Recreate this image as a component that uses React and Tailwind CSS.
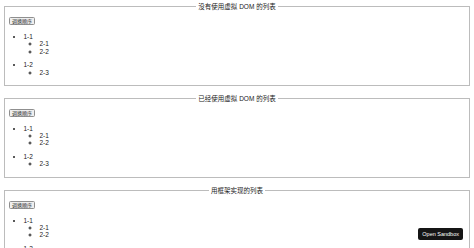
import React from "react";

const font = "font-['Liberation_Sans','Noto_Sans_CJK_SC',sans-serif]";

function ListBlock({ title }) {
  return (
    <fieldset className="border border-[#bcbcbc] px-[4px] pt-[3px] pb-[3px] mb-[8.5px]">
      <legend className="mx-auto px-[2px] text-[6.5px] leading-[7.4px] text-[#222]">{title}</legend>
      <div className="mt-[4px]">
        <button className="border border-[#8f8f8f] bg-[#efefef] rounded-[1.5px] px-[2px] h-[8px] text-[5px] leading-[6px] text-[#222] flex items-center">
          调换顺序
        </button>
      </div>
      <ul className="list-disc pl-[14.5px] mt-[6.5px] mb-[6.5px] text-[6.5px] leading-[7.3px] text-[#222]">
        <li className="pt-[1px]">
          1-1
          <ul className="list-[circle] pl-[16px] mb-[6.5px]">
            <li>2-1</li>
            <li>2-2</li>
          </ul>
        </li>
        <li>
          1-2
          <ul className="list-[circle] pl-[16px]">
            <li>2-3</li>
          </ul>
        </li>
      </ul>
    </fieldset>
  );
}

export default function App() {
  return (
    <div className={`${font} bg-white min-h-[248px] px-[4px] pt-[3px] relative`}>
      <ListBlock title="没有使用虚拟 DOM 的列表" />
      <ListBlock title="已经使用虚拟 DOM 的列表" />
      <ListBlock title="用框架实现的列表" />
      <div className="fixed right-[11px] bottom-[8px] bg-[#151515] text-white text-[5.5px] leading-[12px] h-[12px] px-[4px] rounded-[2px]">
        Open Sandbox
      </div>
    </div>
  );
}
